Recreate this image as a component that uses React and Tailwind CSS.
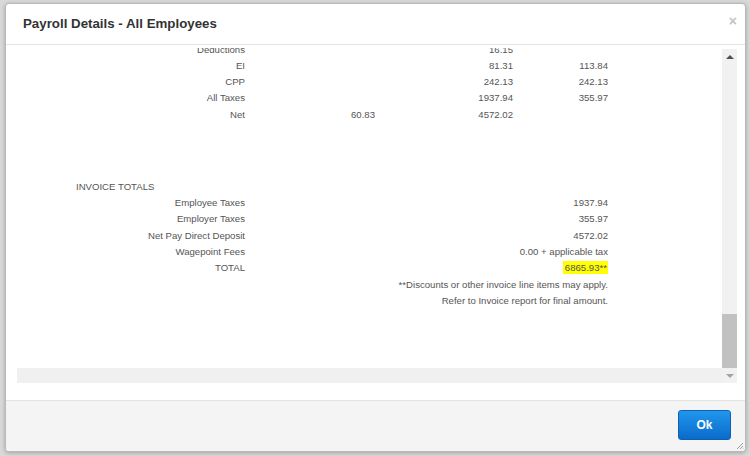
import React from 'react';

const taxRows = [
  { label: 'Deductions', a: '', b: '16.15', c: '' },
  { label: 'EI', a: '', b: '81.31', c: '113.84' },
  { label: 'CPP', a: '', b: '242.13', c: '242.13' },
  { label: 'All Taxes', a: '', b: '1937.94', c: '355.97' },
  { label: 'Net', a: '60.83', b: '4572.02', c: '' },
];

const invoiceRows = [
  { label: 'Employee Taxes', value: '1937.94' },
  { label: 'Employer Taxes', value: '355.97' },
  { label: 'Net Pay Direct Deposit', value: '4572.02' },
  { label: 'Wagepoint Fees', value: '0.00 + applicable tax' },
];

const Row = ({ children }) => (
  <div className="flex h-[16.33px] items-center leading-[16.33px] whitespace-nowrap">{children}</div>
);

const Scrollbar = () => (
  <div className="flex w-[15px] flex-col bg-[#f1f1f1] mt-[1px]">
    <div className="flex h-[15px] items-center justify-center">
      <div className="h-0 w-0 border-x-[4px] border-b-[4px] border-x-transparent border-b-[#505050]" />
    </div>
    <div className="flex-1" />
    <div className="h-[54px] bg-[#c1c1c1]" />
    <div className="flex h-[15px] items-center justify-center">
      <div className="h-0 w-0 border-x-[4px] border-t-[4px] border-x-transparent border-t-[#a3a3a3]" />
    </div>
  </div>
);

const App = () => {
  return (
    <div className="h-[456px] w-[750px] overflow-hidden bg-[#d9d9d9] pl-[5px] pt-[3px] font-['Liberation_Sans',Arial,sans-serif]">
      <div className="relative flex h-[449px] w-[741px] flex-col overflow-hidden rounded-[4px] border border-[#b9b9b9] bg-white shadow-[0_1px_4px_rgba(0,0,0,0.25)]">
        {/* header */}
        <div className="flex h-[41px] items-center justify-between border-b border-[#e3e3e3] pl-[17px] pr-[8px]">
          <h2 className="text-[13.3px] font-bold text-[#333]">Payroll Details - All Employees</h2>
          <span className="mb-[7px] text-[14px] font-bold leading-none text-[#c4c4c4]">×</span>
        </div>

        {/* body */}
        <div className="flex h-[355px] pl-[11px] pr-[8px] pt-[3px] pb-[17px] text-[9.6px] text-[#555]">
          <div className="flex flex-1 flex-col">
            <div className="h-[320px] overflow-hidden">
              <div className="-mt-[6.5px]">
                {taxRows.map((r) => (
                  <Row key={r.label}>
                    <span className="w-[228px] text-right">{r.label}</span>
                    <span className="w-[130px] text-right">{r.a}</span>
                    <span className="w-[138px] text-right">{r.b}</span>
                    <span className="w-[95px] text-right">{r.c}</span>
                  </Row>
                ))}
                <div className="h-[55.6px]" />
                <Row>
                  <span className="pl-[59px]">INVOICE TOTALS</span>
                </Row>
                {invoiceRows.map((r) => (
                  <Row key={r.label}>
                    <span className="w-[228px] text-right">{r.label}</span>
                    <span className="w-[363px] text-right">{r.value}</span>
                  </Row>
                ))}
                <Row>
                  <span className="w-[228px] text-right">TOTAL</span>
                  <span className="w-[363px] text-right">
                    <span className="bg-[#ffff00] py-[1px] pl-[2px] pr-[1px]">6865.93**</span>
                  </span>
                </Row>
                <Row>
                  <span className="w-[591px] text-right">**Discounts or other invoice line items may apply.</span>
                </Row>
                <Row>
                  <span className="w-[591px] text-right">Refer to Invoice report for final amount.</span>
                </Row>
              </div>
            </div>
            <div className="h-[15px] bg-[#f0f0f0]" />
          </div>
          <Scrollbar />
        </div>

        {/* footer */}
        <div className="flex flex-1 items-start justify-end border-t border-[#e3e3e3] bg-[#f4f4f4] pr-[14px] pt-[9px]">
          <button className="h-[30px] w-[53px] rounded-[3px] border border-[#0b62b5] bg-gradient-to-b from-[#2196ec] to-[#0a6bcc] text-[12px] font-bold text-white">
            Ok
          </button>
        </div>

        {/* resize grip */}
        <svg className="absolute bottom-[1px] right-[1px]" width="8" height="8" viewBox="0 0 8 8">
          <path d="M7 1L1 7M7 4L4 7M7 6.5L6.5 7" stroke="#888" strokeWidth="0.8" />
        </svg>
      </div>
    </div>
  );
};

export default App;
